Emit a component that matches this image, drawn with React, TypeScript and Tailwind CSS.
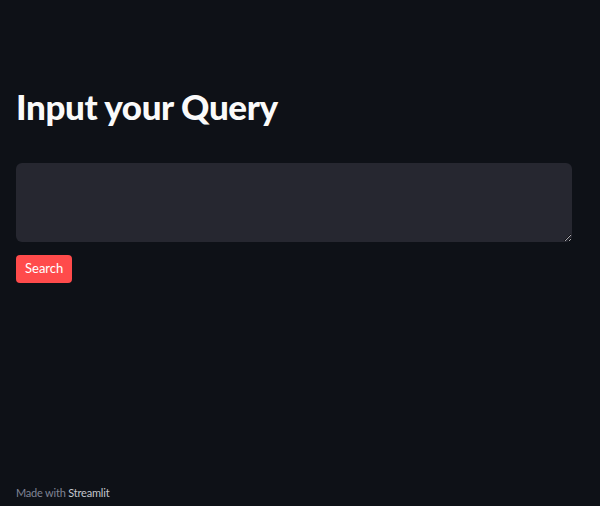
import { useState } from 'react';

export default function App() {
  const [query, setQuery] = useState('');

  return (
    <div
      className="min-h-[506px] w-full bg-[#0e1117] text-[#fafafa] flex flex-col"
      style={{ fontFamily: "Lato, 'Noto Sans', sans-serif" }}
    >
      <main className="flex-1 px-4 pt-[84px]">
        <h1 className="text-[35px] font-black leading-[44px] tracking-[-0.4px] text-[#fafafa]">
          Input your Query
        </h1>

        <div className="mt-[35px] w-[556px]">
          <textarea
            value={query}
            onChange={(e) => setQuery(e.target.value)}
            className="block w-full h-[79px] rounded-[6px] bg-[#262730] px-3 py-2 text-sm text-[#fafafa] outline-none resize-y"
          />
        </div>

        <button className="mt-[13px] h-[28px] px-[9px] rounded-[4px] bg-[#ff4b4b] text-[13px] text-white">
          Search
        </button>
      </main>

      <footer className="px-4 pb-[5px] text-[11px] tracking-[-0.2px] text-[#808495]">
        Made with <span className="text-[#c4c6cc]">Streamlit</span>
      </footer>
    </div>
  );
}
